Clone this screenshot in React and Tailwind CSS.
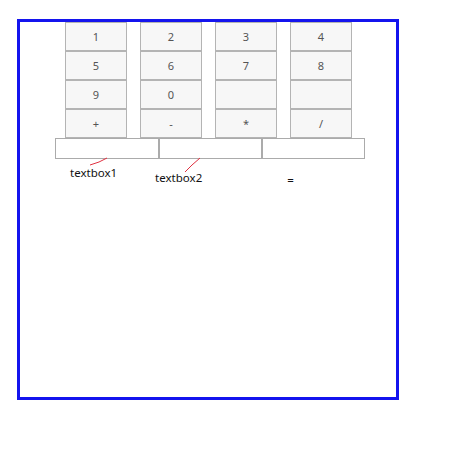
const keys = [
  ['1', '2', '3', '4'],
  ['5', '6', '7', '8'],
  ['9', '0', '', ''],
  ['+', '-', '*', '/'],
];

const KeyButton = ({ label }) => (
  <button className="w-[62px] h-[29px] border border-[#b4b4b4] bg-[#f7f7f7] text-[11px] text-[#555] leading-none">
    {label}
  </button>
);

export default function App() {
  return (
    <div className="w-[474px] h-[456px] bg-white pt-[19px] pl-[17px]" style={{ fontFamily: '"Noto Sans", "Open Sans", sans-serif' }}>
      <div className="relative w-[382px] h-[381px] border-[3px] border-[#1414ee]">
        {/* keypad: four columns with a gap between them */}
        <div className="flex gap-x-[13px] pl-[45px]">
          {[0, 1, 2, 3].map((col) => (
            <div key={col} className="flex flex-col">
              {keys.map((row, i) => (
                <KeyButton key={i} label={row[col]} />
              ))}
            </div>
          ))}
        </div>

        {/* operand / result boxes */}
        <div className="flex pl-[35px]">
          <input className="w-[104px] h-[21px] border border-[#ababab] bg-white outline-none" />
          <input className="w-[103px] h-[21px] border border-[#ababab] bg-white outline-none" />
          <input className="w-[103px] h-[21px] border border-[#ababab] bg-white outline-none" />
        </div>

        <div className="flex text-[11.5px] text-[#111] leading-none">
          <span className="ml-[50px] mt-[8px]">textbox1</span>
          <span className="ml-[38px] mt-[13px]">textbox2</span>
          <span className="ml-[85px] mt-[15px]">=</span>
        </div>

        {/* red pointer strokes from labels up to the boxes */}
        <svg className="absolute left-0 top-0 pointer-events-none" width="382" height="200">
          <path d="M70 143 L79 140 L87 136" stroke="#e03040" strokeWidth="1" fill="none" />
          <path d="M165 150 L172 143 L180 136" stroke="#e03040" strokeWidth="1" fill="none" />
        </svg>
      </div>
    </div>
  );
}
